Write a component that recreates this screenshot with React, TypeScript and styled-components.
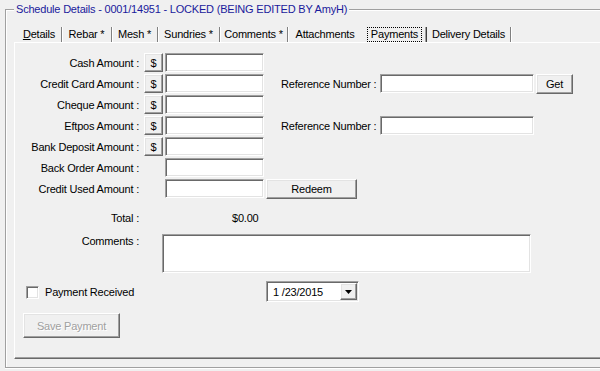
import React from 'react';
import styled, { createGlobalStyle, css } from 'styled-components';

const GlobalStyle = createGlobalStyle`
  html, body {
    margin: 0;
    padding: 0;
    background: #f0f0f0;
    overflow: hidden;
  }
  body {
    width: 600px;
    height: 371px;
    font-family: "Liberation Sans", Arial, sans-serif;
    font-size: 11px;
    letter-spacing: -0.2px;
    color: #000;
  }
  * { box-sizing: border-box; }
`;

// classic win32 3d edges
const sunken = css`
  background: #fff;
  border: 1px solid;
  border-color: #a0a0a0 #fff #fff #a0a0a0;
  box-shadow: inset 1px 1px 0 #696969, inset -1px -1px 0 #e3e3e3;
`;

const raised = css`
  background: #f0f0f0;
  border: 1px solid;
  border-color: #fff #696969 #696969 #fff;
  box-shadow: inset -1px -1px 0 #a0a0a0, inset 1px 1px 0 #e3e3e3;
`;

// the group box runs on past the right edge of the window
const GroupBox = styled.fieldset`
  margin: 3px 0 0 5px;
  padding: 11px 0 8px 8px;
  width: 595px;
  min-width: 0;
  border: 1px solid #a0a0a0;
  border-right: none;
  box-shadow: inset 1px 1px 0 #fff, 0 1px 0 #fff;
`;

const Legend = styled.legend`
  padding: 0 2px;
  line-height: 13px;
  color: #1a1a9c;
  background: #f0f0f0;
`;

const TabStrip = styled.div`
  display: flex;
  height: 15px;
  padding-left: 3px;
`;

const Tab = styled.div<{ $w: number; $active?: boolean }>`
  width: ${p => p.$w}px;
  display: flex;
  align-items: center;
  justify-content: center;
  line-height: 13px;
  white-space: nowrap;
  border-right: 1px solid #808080;
  box-shadow: 1px 0 0 #fff;
  ${p =>
    p.$active &&
    css`
      position: relative;
      margin-left: -1px;
      background: #f0f0f0;
      border-left: 1px solid #f0f0f0;
      border-right: 1px solid #404040;
      box-shadow: inset -1px 0 0 #a0a0a0;
    `}
`;

const Focus = styled.span`
  outline: 1px dotted #000;
  outline-offset: 0;
  padding: 0 3px;
`;

const Accel = styled.span`
  text-decoration: underline;
`;

const TabPanel = styled.div`
  height: 317px;
  padding-top: 10px;
  border-top: 1px solid #fff;
  border-left: 1px solid #fff;
  border-bottom: 1px solid #696969;
  box-shadow: inset 0 -1px 0 #a0a0a0;
  display: flex;
  flex-direction: column;
  gap: 2px;
`;

const Row = styled.div<{ $h?: number; $mt?: number; $top?: boolean }>`
  display: flex;
  align-items: ${p => (p.$top ? 'flex-start' : 'center')};
  height: ${p => p.$h ?? 19}px;
  margin-top: ${p => p.$mt ?? 0}px;
  flex: none;
`;

const Label = styled.div<{ $pt?: number }>`
  width: 124px;
  margin-right: 5px;
  flex: none;
  text-align: right;
  white-space: nowrap;
  padding-top: ${p => p.$pt ?? 0}px;
`;

const Btn = styled.button<{ $w: number; $h?: number; $ml?: number }>`
  ${raised};
  width: ${p => p.$w}px;
  height: ${p => p.$h ?? 20}px;
  margin: 0 0 0 ${p => p.$ml ?? 0}px;
  padding: 0;
  flex: none;
  font: inherit;
  letter-spacing: inherit;
  color: #000;
  &:disabled {
    color: #a0a0a0;
    text-shadow: 1px 1px 0 #fff;
  }
`;

const DollarBtn = styled(Btn)`
  margin-right: 2px;
`;

const Spacer = styled.div`
  width: 21px;
  flex: none;
`;

const TextBox = styled.input<{ $w: number; $h?: number; $ml?: number }>`
  ${sunken};
  width: ${p => p.$w}px;
  height: ${p => p.$h ?? 19}px;
  margin: 0 0 0 ${p => p.$ml ?? 0}px;
  padding: 0 3px;
  flex: none;
  font: inherit;
  outline: none;
`;

const MemoBox = styled.textarea`
  ${sunken};
  width: 369px;
  height: 39px;
  margin: 0 0 0 18px;
  padding: 2px 3px;
  flex: none;
  font: inherit;
  resize: none;
  outline: none;
`;

const RefLabel = styled.div`
  width: 99px;
  margin-left: 17px;
  flex: none;
  white-space: nowrap;
`;

const Value = styled.div`
  margin-left: 88px;
`;

const CheckCell = styled.label`
  display: flex;
  align-items: center;
  width: 251px;
  padding-left: 11px;
  flex: none;
`;

const CheckBox = styled.span`
  ${sunken};
  width: 13px;
  height: 13px;
  margin-top: 2px;
  flex: none;
`;

const CheckText = styled.span`
  margin-left: 6px;
`;

const DatePicker = styled.div`
  ${sunken};
  width: 93px;
  height: 21px;
  display: flex;
  align-items: center;
  justify-content: space-between;
  padding: 0 1px 0 6px;
  flex: none;
`;

const DropBtn = styled.span`
  ${raised};
  width: 17px;
  height: 17px;
  display: flex;
  align-items: center;
  justify-content: center;
`;

const SaveRow = styled.div`
  margin: 9px 0 0 8px;
`;

const Arrow = () => (
  <svg width="7" height="4" viewBox="0 0 7 4">
    <path d="M0 0h7L3.5 4z" fill="#000" />
  </svg>
);

const tabs = [
  { label: 'Details', w: 45 },
  { label: 'Rebar *', w: 50 },
  { label: 'Mesh *', w: 46 },
  { label: 'Sundries *', w: 62 },
  { label: 'Comments *', w: 68 },
  { label: 'Attachments', w: 75 },
  { label: 'Payments', w: 65, active: true },
  { label: 'Delivery Details', w: 84 },
];

const AmountRow = ({ label, dollar, children }: { label: string; dollar?: boolean; children?: React.ReactNode }) => (
  <Row>
    <Label>{label}</Label>
    {dollar ? <DollarBtn $w={19} $h={19}>$</DollarBtn> : <Spacer />}
    <TextBox $w={99} />
    {children}
  </Row>
);

export default function App() {
  return (
    <>
      <GlobalStyle />
      <GroupBox>
        <Legend>Schedule Details - 0001/14951 - LOCKED (BEING EDITED BY AmyH)</Legend>
        <TabStrip>
          {tabs.map(t => (
            <Tab key={t.label} $w={t.w} $active={t.active}>
              {t.label === 'Details' ? (
                <span>
                  <Accel>D</Accel>etails
                </span>
              ) : t.active ? (
                <Focus>{t.label}</Focus>
              ) : (
                t.label
              )}
            </Tab>
          ))}
        </TabStrip>
        <TabPanel>
          <AmountRow label="Cash Amount :" dollar />
          <AmountRow label="Credit Card Amount :" dollar>
            <RefLabel>Reference Number :</RefLabel>
            <TextBox $w={154} />
            <Btn $w={37} $ml={2}>Get</Btn>
          </AmountRow>
          <AmountRow label="Cheque Amount :" dollar />
          <AmountRow label="Eftpos Amount :" dollar>
            <RefLabel>Reference Number :</RefLabel>
            <TextBox $w={154} />
          </AmountRow>
          <AmountRow label="Bank Deposit Amount :" dollar />
          <AmountRow label="Back Order Amount :" />
          <AmountRow label="Credit Used Amount :">
            <Btn $w={91} $ml={2}>Redeem</Btn>
          </AmountRow>
          <Row $mt={8}>
            <Label>Total :</Label>
            <Value>$0.00</Value>
          </Row>
          <Row $mt={5} $h={39} $top>
            <Label $pt={1}>Comments :</Label>
            <MemoBox />
          </Row>
          <Row $mt={6} $h={21}>
            <CheckCell>
              <CheckBox />
              <CheckText>Payment Received</CheckText>
            </CheckCell>
            <DatePicker>
              <span>1 /23/2015</span>
              <DropBtn>
                <Arrow />
              </DropBtn>
            </DatePicker>
          </Row>
          <SaveRow>
            <Btn $w={97} $h={25} disabled>
              Save Payment
            </Btn>
          </SaveRow>
        </TabPanel>
      </GroupBox>
    </>
  );
}
